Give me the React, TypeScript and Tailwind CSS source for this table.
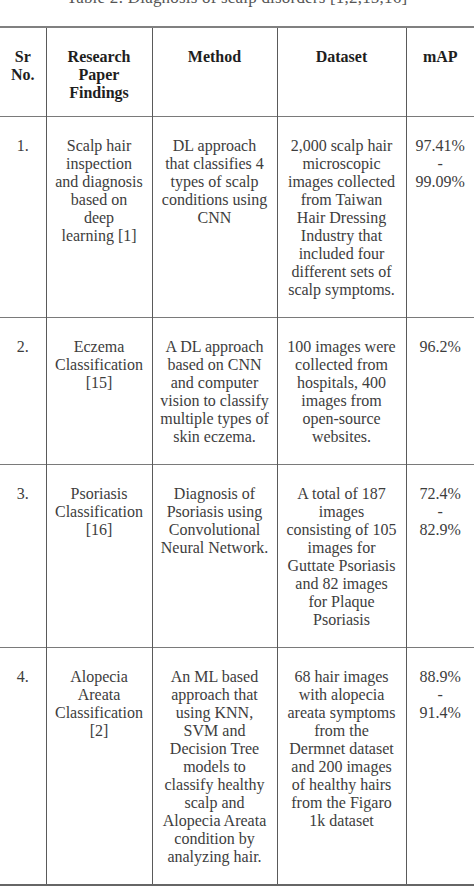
const header = [["Sr", "No."], ["Research", "Paper", "Findings"], ["Method"], ["Dataset"], ["mAP"]];

const rows = [
  {
    no: "1.",
    finding: ["Scalp hair", "inspection", "and diagnosis", "based on", "deep", "learning [1]"],
    method: ["DL approach", "that classifies 4", "types of scalp", "conditions using", "CNN"],
    dataset: [
      "2,000 scalp hair",
      "microscopic",
      "images collected",
      "from Taiwan",
      "Hair Dressing",
      "Industry that",
      "included four",
      "different sets of",
      "scalp symptoms.",
    ],
    map: ["97.41%", "-", "99.09%"],
  },
  {
    no: "2.",
    finding: ["Eczema", "Classification", "[15]"],
    method: ["A DL approach", "based on CNN", "and computer", "vision to classify", "multiple types of", "skin eczema."],
    dataset: ["100 images were", "collected from", "hospitals, 400", "images from", "open-source", "websites."],
    map: ["96.2%"],
  },
  {
    no: "3.",
    finding: ["Psoriasis", "Classification", "[16]"],
    method: ["Diagnosis of", "Psoriasis using", "Convolutional", "Neural Network."],
    dataset: [
      "A total of 187",
      "images",
      "consisting of 105",
      "images for",
      "Guttate Psoriasis",
      "and 82 images",
      "for Plaque",
      "Psoriasis",
    ],
    map: ["72.4%", "-", "82.9%"],
  },
  {
    no: "4.",
    finding: ["Alopecia", "Areata", "Classification", "[2]"],
    method: [
      "An ML based",
      "approach that",
      "using KNN,",
      "SVM and",
      "Decision Tree",
      "models to",
      "classify healthy",
      "scalp and",
      "Alopecia Areata",
      "condition by",
      "analyzing hair.",
    ],
    dataset: [
      "68 hair images",
      "with alopecia",
      "areata symptoms",
      "from the",
      "Dermnet dataset",
      "and 200 images",
      "of healthy hairs",
      "from the Figaro",
      "1k dataset",
    ],
    map: ["88.9%", "-", "91.4%"],
  },
];

function Lines({ lines }: { lines: string[] }) {
  return (
    <>
      {lines.map((l, i) => (
        <div key={i} className="whitespace-nowrap">
          {l}
        </div>
      ))}
    </>
  );
}

const cell = "border-l border-[#5a5a5a] pt-[20px] pb-[18px] align-top text-center";

export default function App() {
  return (
    <div
      className="w-[474px] h-[886px] overflow-hidden bg-white text-[16px] leading-[18px] text-[#3d3d3d]"
      style={{ fontFamily: '"Liberation Serif", "Times New Roman", serif' }}
    >
      {/* caption is cropped by the top edge in the source */}
      <div className="-mt-[11px] h-[18px] whitespace-nowrap text-center text-[17px] leading-[18px] tracking-[0.2px] text-[#555]">
        Table 2: Diagnosis of scalp disorders [1,2,15,16]
      </div>

      <table className="mt-[19px] w-[474px] table-fixed border-collapse">
        <colgroup>
          <col className="w-[46px]" />
          <col className="w-[106px]" />
          <col className="w-[125px]" />
          <col className="w-[129px]" />
          <col className="w-[68px]" />
        </colgroup>
        <thead>
          <tr className="border-t-2 border-[#808080]">
            {header.map((h, i) => (
              <th
                key={i}
                className={`pt-[20px] pb-[14px] align-top text-center font-bold text-[#1e1e1e] ${
                  i > 0 ? "border-l border-[#5a5a5a]" : ""
                }`}
              >
                <Lines lines={h} />
              </th>
            ))}
          </tr>
        </thead>
        <tbody>
          {rows.map((r, idx) => (
            <tr
              key={r.no}
              className={`border-t border-[#7a7a7a] ${idx === rows.length - 1 ? "border-b-2 border-b-[#666]" : ""}`}
            >
              <td className="pt-[20px] pb-[18px] align-top text-center">{r.no}</td>
              <td className={cell}>
                <Lines lines={r.finding} />
              </td>
              <td className={cell}>
                <Lines lines={r.method} />
              </td>
              <td className={cell}>
                <Lines lines={r.dataset} />
              </td>
              <td className={cell}>
                <Lines lines={r.map} />
              </td>
            </tr>
          ))}
        </tbody>
      </table>
    </div>
  );
}
